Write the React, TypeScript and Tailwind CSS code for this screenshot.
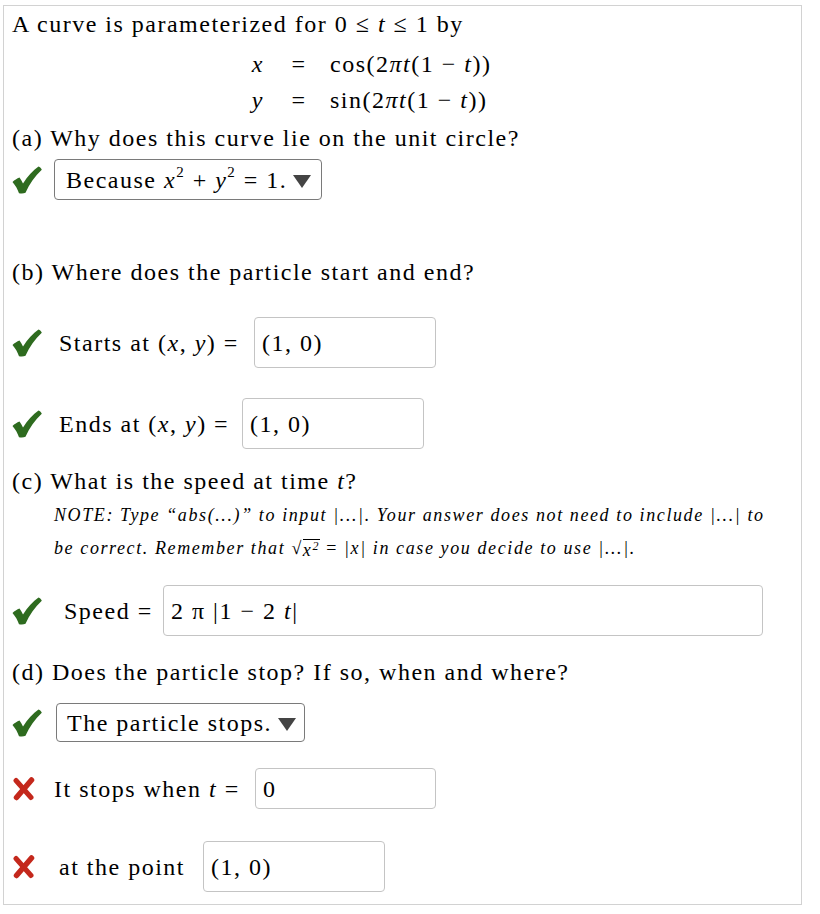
import React from 'react';

const serif = { fontFamily: '"Liberation Serif", "Times New Roman", serif' };

// green check / red cross marks shown before each answer
const Mark = ({ ok }: { ok: boolean }) =>
  ok ? (
    <svg width="30" height="28" viewBox="0 0 30 28" className="shrink-0">
      <path
        d="M0.5 16 C2.5 14 5 12.5 7.5 11.5 C9 13.5 10 15.5 11 17.5 C15.5 10 21 4.5 26.5 0.5 C28 1 29.3 2.3 29.8 3.8 C23 10 17.5 18 13.5 26.8 C12 27.6 9.5 27.8 7 27.3 C5.5 23 3.5 19.5 0.5 16 Z"
        fill="#2e6b1f"
      />
    </svg>
  ) : (
    <svg width="30" height="24" viewBox="0 0 30 24" className="shrink-0">
      <path d="M4 3.5 L19 20.5" stroke="#c4281c" strokeWidth="5" strokeLinecap="round" />
      <path d="M19.5 3 L4.5 20.5" stroke="#c4281c" strokeWidth="5.5" strokeLinecap="round" />
    </svg>
  );

const V = ({ children }: { children: React.ReactNode }) => <i>{children}</i>;

const Caret = () => (
  <svg width="18" height="13" viewBox="0 0 18 13" className="ml-[6px] mt-[4px]">
    <polygon points="0,0 18,0 9,13" fill="#444" />
  </svg>
);

const Input = ({ w, h, children }: { w: string; h: string; children: React.ReactNode }) => (
  <div className={`${w} ${h} flex items-center rounded-[4px] border border-[#c4c4c4] px-[7px] whitespace-nowrap`}>{children}</div>
);

export default function App() {
  return (
    <div className="bg-white text-black pl-[3px] pt-[5px] w-[820px] h-[914px]" style={serif}>
      <div className="w-[799px] h-[900px] border border-[#d2d2d2] pl-[8px] text-[24px] tracking-[1.5px]">
        <div className="h-[36px] flex items-center whitespace-nowrap">
          A curve is parameterized for 0&nbsp;≤&nbsp;<V>t</V>&nbsp;≤&nbsp;1 by
        </div>

        {/* parametric equations */}
        <div className="mt-[4px] grid grid-cols-[20px_66px_auto] ml-[232px] w-fit">
          <div className="h-[36px] flex items-center justify-end"><V>x</V></div>
          <div className="h-[36px] flex items-center justify-center pl-[4px]">=</div>
          <div className="h-[36px] flex items-center whitespace-nowrap">cos(2<V>πt</V>(1&nbsp;−&nbsp;<V>t</V>))</div>
          <div className="h-[36px] flex items-center justify-end"><V>y</V></div>
          <div className="h-[36px] flex items-center justify-center pl-[4px]">=</div>
          <div className="h-[36px] flex items-center whitespace-nowrap">sin(2<V>πt</V>(1&nbsp;−&nbsp;<V>t</V>))</div>
        </div>

        <div className="mt-[2px] h-[36px] flex items-center whitespace-nowrap">(a) Why does this curve lie on the unit circle?</div>
        <div className="mt-[3px] flex items-center">
          <Mark ok />
          <div className="ml-[12px] h-[41px] flex items-center whitespace-nowrap rounded-[4px] border border-[#7a7a7a] pl-[11px] pr-[10px]">
            Because&nbsp;<V>x</V><sup className="text-[15px]">2</sup>&nbsp;+&nbsp;<V>y</V><sup className="text-[15px]">2</sup>&nbsp;=&nbsp;1.
            <Caret />
          </div>
        </div>

        <div className="mt-[54px] h-[36px] flex items-center whitespace-nowrap">(b) Where does the particle start and end?</div>
        <div className="mt-[27px] flex items-center">
          <Mark ok />
          <div className="ml-[17px] w-[195px] whitespace-nowrap">
            Starts at (<V>x</V>,&nbsp;<V>y</V>)&nbsp;=
          </div>
          <Input w="w-[182px]" h="h-[51px]">(1,&nbsp;0)</Input>
        </div>
        <div className="mt-[30px] flex items-center">
          <Mark ok />
          <div className="ml-[17px] w-[183px] whitespace-nowrap">
            Ends at (<V>x</V>,&nbsp;<V>y</V>)&nbsp;=
          </div>
          <Input w="w-[182px]" h="h-[51px]">(1,&nbsp;0)</Input>
        </div>

        <div className="mt-[14px] h-[36px] flex items-center whitespace-nowrap">
          (c) What is the speed at time&nbsp;<V>t</V>?
        </div>
        <div className="ml-[42px] text-[18px] tracking-[1.6px] italic">
          <div className="h-[33px] flex items-center whitespace-nowrap">
            NOTE: Type “abs(...)” to input |...|. Your answer does not need to include |...| to
          </div>
          <div className="h-[33px] flex items-center whitespace-nowrap">
            be correct. Remember that&nbsp;
            <span className="not-italic">√</span>
            <span className="border-t border-black pt-[1px] leading-none">
              x<sup className="text-[12px]">2</sup>
            </span>
            &nbsp;<span className="not-italic">=</span>&nbsp;|x| in case you decide to use |...|.
          </div>
        </div>

        <div className="mt-[20px] flex items-center">
          <Mark ok />
          <div className="ml-[22px] w-[99px] whitespace-nowrap">Speed&nbsp;=</div>
          <Input w="w-[600px]" h="h-[51px]">
            2&nbsp;π&nbsp;|1&nbsp;−&nbsp;2&nbsp;<V>t</V>|
          </Input>
        </div>

        <div className="mt-[18px] h-[36px] flex items-center whitespace-nowrap">
          (d) Does the particle stop? If so, when and where?
        </div>
        <div className="mt-[13px] flex items-center">
          <Mark ok />
          <div className="ml-[14px] h-[39px] flex items-center whitespace-nowrap rounded-[4px] border border-[#7a7a7a] pl-[10px] pr-[8px]">
            The particle stops.
            <Caret />
          </div>
        </div>

        <div className="mt-[26px] flex items-center">
          <Mark ok={false} />
          <div className="ml-[12px] w-[201px] whitespace-nowrap">
            It stops when <V>t</V>&nbsp;=
          </div>
          <Input w="w-[181px]" h="h-[41px]">0</Input>
        </div>
        <div className="mt-[32px] flex items-center">
          <Mark ok={false} />
          <div className="ml-[17px] w-[144px] whitespace-nowrap">at the point</div>
          <Input w="w-[182px]" h="h-[51px]">(1,&nbsp;0)</Input>
        </div>
      </div>
    </div>
  );
}
